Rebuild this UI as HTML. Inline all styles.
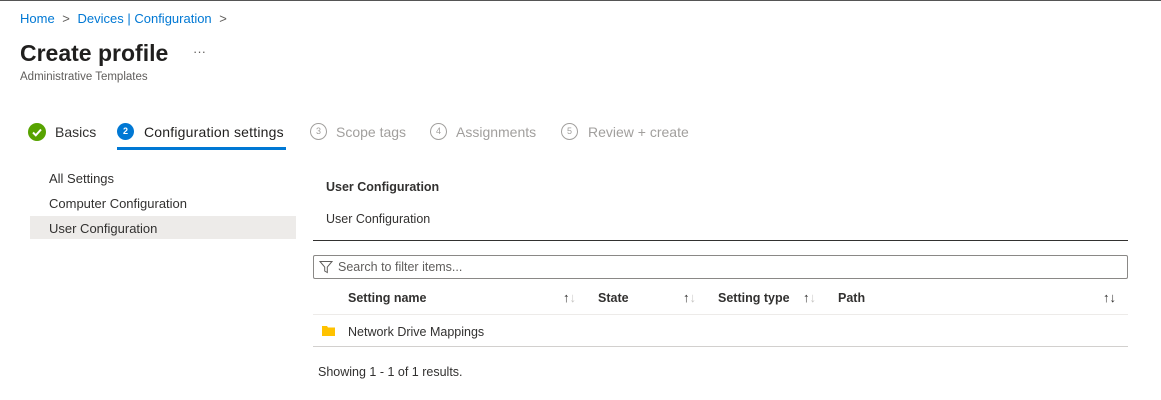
<!DOCTYPE html>
<html><head><meta charset="utf-8"><style>
*{margin:0;padding:0;box-sizing:border-box}
body{width:1161px;height:400px;background:#fff;font-family:"Liberation Sans",sans-serif;color:#323130;position:relative;overflow:hidden;font-size:13px}
.a{position:absolute;white-space:nowrap;line-height:16px}
.blue{color:#0078d4}
.g{color:#a19f9d}
.c{position:absolute;width:17px;height:17px;border-radius:50%;border:1px solid #a19f9d;color:#a19f9d;font-size:9px;line-height:15px;text-align:center}
.hd{font-weight:bold;color:#323130}
.s{position:absolute;font-size:13px;color:#323130;line-height:16px}
.s span{color:#c8c6c4}
</style></head><body>
<div style="position:absolute;left:0;top:0;width:1161px;height:1px;background:#555"></div>
<div class="a blue" style="left:20px;top:11px;font-size:13px">Home <span style="color:#605e5c;margin:0 4px">&gt;</span> Devices | Configuration <span style="color:#605e5c;margin-left:4px">&gt;</span></div>
<div class="a" style="left:20px;top:38px;font-size:23px;line-height:30px;font-weight:bold;color:#201f1e">Create profile</div>
<div class="a" style="left:193px;top:44px;color:#605e5c">···</div>
<div class="a" style="left:20px;top:69px;font-size:11.5px;color:#605e5c">Administrative Templates</div>

<div style="position:absolute;left:28px;top:123px;width:18px;height:18px;border-radius:50%;background:#57a300"></div>
<svg style="position:absolute;left:28px;top:123px" width="18" height="18"><path d="M5 9.5l2.8 2.8L13 6.5" stroke="#fff" stroke-width="2" fill="none"/></svg>
<div class="a" style="left:55px;top:124px;font-size:14px">Basics</div>
<div style="position:absolute;left:117px;top:123px;width:17px;height:17px;border-radius:50%;background:#0078d4;color:#fff;font-size:9px;line-height:17px;text-align:center;font-weight:bold">2</div>
<div class="a" style="left:144px;top:124px;font-size:14px;color:#201f1e;letter-spacing:0.2px">Configuration settings</div>
<div style="position:absolute;left:117px;top:147px;width:169px;height:3px;background:#0078d4"></div>
<div class="c" style="left:310px;top:123px">3</div>
<div class="a g" style="left:336px;top:124px;font-size:14px">Scope tags</div>
<div class="c" style="left:430px;top:123px">4</div>
<div class="a g" style="left:456px;top:124px;font-size:14px">Assignments</div>
<div class="c" style="left:561px;top:123px">5</div>
<div class="a g" style="left:588px;top:124px;font-size:14px">Review + create</div>

<div class="a" style="left:49px;top:171px">All Settings</div>
<div class="a" style="left:49px;top:196px">Computer Configuration</div>
<div style="position:absolute;left:30px;top:216px;width:266px;height:23px;background:#edebe9"></div>
<div class="a" style="left:49px;top:221px">User Configuration</div>

<div class="a hd" style="left:326px;top:179px;font-size:12.5px">User Configuration</div>
<div class="a" style="left:326px;top:211px;font-size:12.5px">User Configuration</div>
<div style="position:absolute;left:313px;top:240px;width:815px;height:1px;background:#323130"></div>
<div style="position:absolute;left:313px;top:255px;width:815px;height:24px;border:1px solid #8a8886;border-radius:2px"></div>
<svg style="position:absolute;left:319px;top:260px" width="14" height="14"><path d="M1 1.5h12L8.3 7v5.5L5.7 11V7z" stroke="#605e5c" fill="none" stroke-width="1"/></svg>
<div class="a" style="left:338px;top:259px;font-size:12.5px;color:#605e5c">Search to filter items...</div>

<div class="a hd" style="left:348px;top:290px;font-size:12.5px">Setting name</div>
<div class="s" style="left:563px;top:290px">↑<span>↓</span></div>
<div class="a hd" style="left:598px;top:290px;font-size:12.5px">State</div>
<div class="s" style="left:683px;top:290px">↑<span>↓</span></div>
<div class="a hd" style="left:718px;top:290px;font-size:12.5px">Setting type</div>
<div class="s" style="left:803px;top:290px">↑<span>↓</span></div>
<div class="a hd" style="left:838px;top:290px;font-size:12.5px">Path</div>
<div class="s" style="left:1103px;top:290px">↑↓</div>
<div style="position:absolute;left:313px;top:314px;width:815px;height:1px;background:#edebe9"></div>
<svg style="position:absolute;left:322px;top:325px" width="13" height="11"><path d="M0 1h5l1 1.5h7V11H0z" fill="#ffc200"/></svg>
<div class="a" style="left:348px;top:324px;font-size:12.5px">Network Drive Mappings</div>
<div style="position:absolute;left:313px;top:346px;width:815px;height:1px;background:#d2d0ce"></div>
<div class="a" style="left:318px;top:364px;font-size:12.5px">Showing 1 - 1 of 1 results.</div>
</body></html>
